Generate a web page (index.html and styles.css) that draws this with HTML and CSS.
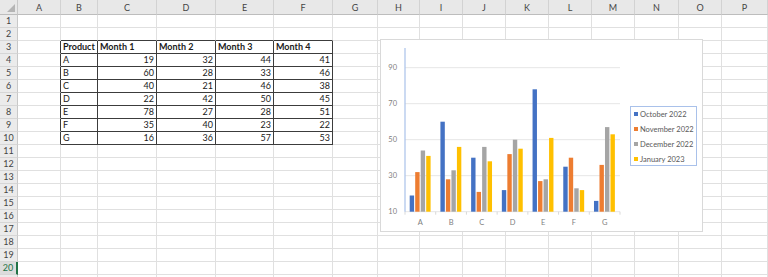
FILE: index.html
```html
<!DOCTYPE html>
<html>
<head>
    <meta charset="UTF-8" />
    <title>Sales by Month</title>
    <link rel="stylesheet" href="styles.css">
</head>
<body>
    <div class="sheet">
        <div class="grid" id="grid"></div>
        <div class="chart">
            <svg id="plot" width="250" height="193" viewBox="0 0 250 193"></svg>
            <div class="legend">
                <div class="legend-item"><span class="swatch oct"></span>October 2022</div>
                <div class="legend-item"><span class="swatch nov"></span>November 2022</div>
                <div class="legend-item"><span class="swatch dec"></span>December 2022</div>
                <div class="legend-item"><span class="swatch jan"></span>January 2023</div>
            </div>
        </div>
    </div>
    <script>
        const cols = ['A','B','C','D','E','F','G','H','I','J','K','L','M','N','O','P'];
        const data = [
            ['A', 19, 32, 44, 41],
            ['B', 60, 28, 33, 46],
            ['C', 40, 21, 46, 38],
            ['D', 22, 42, 50, 45],
            ['E', 78, 27, 28, 51],
            ['F', 35, 40, 23, 22],
            ['G', 16, 36, 57, 53]
        ];
        const head = ['Product', 'Month 1', 'Month 2', 'Month 3', 'Month 4'];

        // build the sheet
        let html = '<div class="corner"><span class="tri"></span></div>';
        cols.forEach(c => html += `<div class="col-head">${c}</div>`);
        for (let r = 1; r <= 21; r++) {
            // row 21 only peeks in at the bottom edge
            html += `<div class="row-head${r === 20 ? ' active' : ''}">${r < 21 ? r : ''}</div>`;
            for (let c = 0; c < cols.length; c++) {
                let cls = 'cell';
                let text = '';
                const inTable = r >= 3 && r <= 10 && c >= 1 && c <= 5;
                if (inTable) {
                    cls += ' t';
                    if (r === 3) {
                        cls += ' bold';
                        text = head[c - 1];
                    } else {
                        text = data[r - 4][c - 1];
                        if (c > 1) cls += ' num';
                    }
                }
                if (r === 2 && c >= 1 && c <= 5) cls += ' t-top';
                if (c === 0 && r >= 3 && r <= 10) cls += ' t-left';
                html += `<div class="${cls}">${text}</div>`;
            }
        }
        document.getElementById('grid').innerHTML = html;

        // clustered column chart
        const colors = ['#4472c4', '#ed7d31', '#a5a5a5', '#ffc000'];
        const x0 = 25, x1 = 240, base = 172.7, scale = 1.8;
        const catW = (x1 - x0) / data.length;
        const y = v => base - (v - 10) * scale;
        let svg = '';
        [90, 70, 50, 30, 10].forEach(v => {
            svg += `<line x1="${x0}" x2="${x1}" y1="${y(v)}" y2="${y(v)}" class="grid-line"/>`;
            svg += `<text x="17" y="${y(v) + 2.6}" class="axis-label" text-anchor="end">${v}</text>`;
        });
        for (let i = 0; i <= data.length; i++) {
            const tx = x0 + i * catW;
            svg += `<line x1="${tx}" x2="${tx}" y1="${base}" y2="${base + 3}" class="tick"/>`;
        }
        data.forEach((row, i) => {
            for (let s = 0; s < 4; s++) {
                const bx = x0 + i * catW + 4.7 + s * 5.5;
                svg += `<rect x="${bx}" y="${y(row[s + 1])}" width="4.4" height="${(row[s + 1] - 10) * scale}" fill="${colors[s]}"/>`;
            }
            svg += `<text x="${x0 + i * catW + catW / 2}" y="185.5" class="axis-label" text-anchor="middle">${row[0]}</text>`;
        });
        svg += `<line x1="${x0}" x2="${x0}" y1="9" y2="${base}" class="y-axis"/>`;
        document.getElementById('plot').innerHTML = svg;
    </script>
</body>
</html>
```

FILE: styles.css
```css
body {
    margin: 0;
    padding: 0;
    background: #fff;
    font-family: Lato, "Liberation Sans", sans-serif;
    overflow: hidden;
}
.sheet {
    position: relative;
    width: 768px;
    height: 277px;
}
.grid {
    display: grid;
    grid-template-columns: 18px 43px 37px 59px 59px 58px 59px 45px 42px 43px 43px 43px 43px 43px 44px 43px 46px;
    grid-template-rows: 15px repeat(21, 13px);
}
.grid > div {
    box-sizing: border-box;
    overflow: hidden;
    white-space: nowrap;
    font-size: 9px;
    line-height: 12px;
}
.corner {
    background: #e8e8e8;
    border-right: 1px solid #c8c8c8;
    border-bottom: 1px solid #bdbdbd;
    position: relative;
}
.tri {
    position: absolute;
    right: 2px;
    bottom: 2px;
    width: 0;
    height: 0;
    border-left: 8px solid transparent;
    border-bottom: 8px solid #b5b5b5;
}
.col-head {
    background: #e8e8e8;
    color: #444;
    text-align: center;
    border-right: 1px solid #d2d2d2;
    border-bottom: 1px solid #bdbdbd;
    line-height: 15px !important;
}
.row-head {
    background: #ebebeb;
    color: #444;
    text-align: center;
    border-right: 1px solid #c8c8c8;
    border-bottom: 1px solid #d6d6d6;
}
.row-head.active {
    background: #dcdcdc;
    color: #217346;
    border-right: 2px solid #217346;
}
.cell {
    color: #1a1a1a;
    padding: 0 2px;
    border-right: 1px solid #e0e0e0;
    border-bottom: 1px solid #e0e0e0;
}
.cell.t {
    border-right-color: #3c3c3c;
    border-bottom-color: #3c3c3c;
}
.cell.t-top {
    border-bottom-color: #3c3c3c;
}
.cell.t-left {
    border-right-color: #3c3c3c;
}
.cell.num {
    text-align: right;
}
.cell.bold {
    font-weight: bold;
}
.chart {
    position: absolute;
    left: 380px;
    top: 39px;
    width: 323px;
    height: 193px;
    box-sizing: border-box;
    background: #fff;
    border: 1px solid #d9d9d9;
    display: flex;
    align-items: center;
}
.chart svg {
    flex: none;
    margin: -1px 0 0 -1px;
}
.grid-line {
    stroke: #e6e6e6;
    stroke-width: 1;
}
.tick {
    stroke: #d9d9d9;
    stroke-width: 1;
}
.y-axis {
    stroke: #a9c1ea;
    stroke-width: 1.2;
}
.axis-label {
    font-size: 7.5px;
    fill: #7f7f7f;
    font-family: Lato, "Liberation Sans", sans-serif;
}
.legend {
    width: 67px;
    height: 60px;
    box-sizing: border-box;
    border: 1px solid #a9c1ea;
    padding: 0 3px;
    margin-left: 0;
}
.legend-item {
    display: flex;
    align-items: center;
    height: 15px;
    font-size: 7.5px;
    color: #595959;
    white-space: nowrap;
}
.swatch {
    width: 4px;
    height: 4px;
    margin-right: 2px;
    flex: none;
}
.swatch.oct { background: #4472c4; }
.swatch.nov { background: #ed7d31; }
.swatch.dec { background: #a5a5a5; }
.swatch.jan { background: #ffc000; }
```
